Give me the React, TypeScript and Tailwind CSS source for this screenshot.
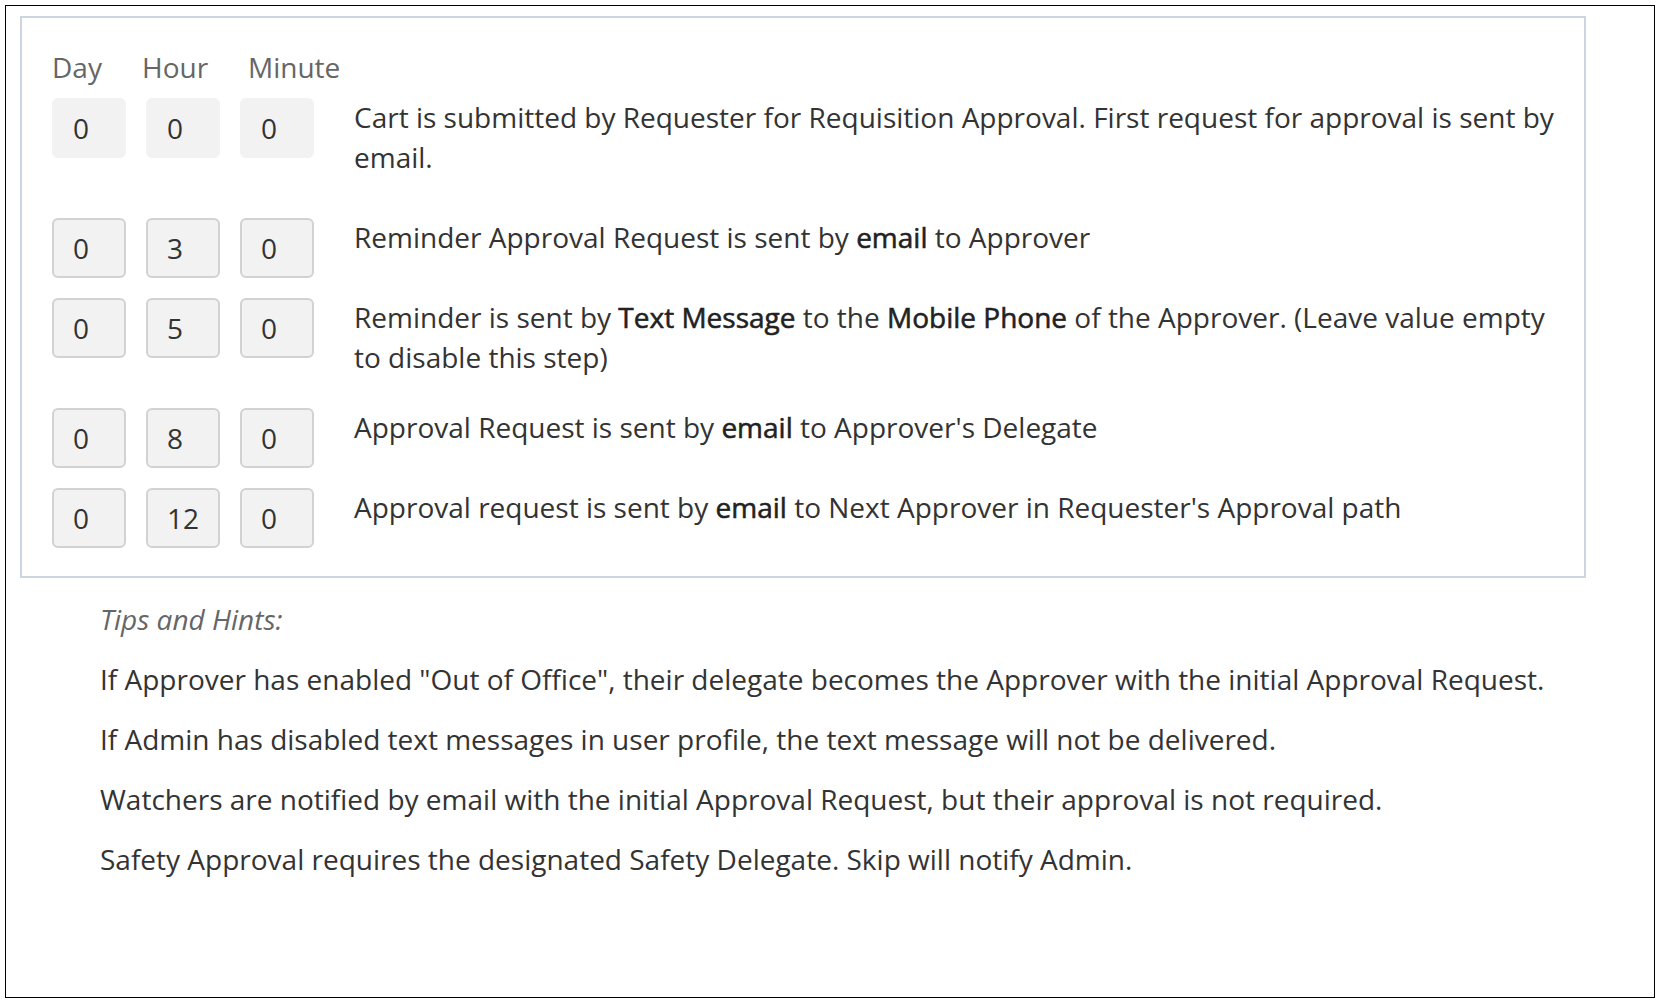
import React from "react";

type Step = {
  day: string;
  hour: string;
  minute: string;
  text: React.ReactNode;
  first?: boolean;
  gap: string;
};

// emphasised words: a light stroke over the regular face
const B = ({ children }: { children: React.ReactNode }) => (
  <span className="text-[#222] [-webkit-text-stroke:0.55px_#222]">{children}</span>
);

const steps: Step[] = [
  {
    day: "0",
    hour: "0",
    minute: "0",
    first: true,
    gap: "mb-[41px]",
    text: (
      <>
        Cart is submitted by Requester for Requisition Approval. First request for approval is sent by
        email.
      </>
    ),
  },
  {
    day: "0",
    hour: "3",
    minute: "0",
    gap: "mb-[20px]",
    text: (
      <>
        Reminder Approval Request is sent by <B>email</B> to Approver
      </>
    ),
  },
  {
    day: "0",
    hour: "5",
    minute: "0",
    gap: "mb-[31px]",
    text: (
      <>
        Reminder is sent by <B>Text Message</B> to the <B>Mobile Phone</B> of the Approver. (Leave value
        empty to disable this step)
      </>
    ),
  },
  {
    day: "0",
    hour: "8",
    minute: "0",
    gap: "mb-[20px]",
    text: (
      <>
        Approval Request is sent by <B>email</B> to Approver's Delegate
      </>
    ),
  },
  {
    day: "0",
    hour: "12",
    minute: "0",
    gap: "mb-0",
    text: (
      <>
        Approval request is sent by <B>email</B> to Next Approver in Requester's Approval path
      </>
    ),
  },
];

const hints = [
  'If Approver has enabled "Out of Office", their delegate becomes the Approver with the initial Approval Request.',
  "If Admin has disabled text messages in user profile, the text message will not be delivered.",
  "Watchers are notified by email with the initial Approval Request, but their approval is not required.",
  "Safety Approval requires the designated Safety Delegate. Skip will notify Admin.",
];

function TimeBox({ value, plain }: { value: string; plain?: boolean }) {
  return (
    <input
      type="text"
      readOnly
      value={value}
      className={
        "w-[74px] h-[60px] shrink-0 rounded-[6px] border-2 bg-[#f2f2f2] pl-[19px] text-[28px] text-[#333] outline-none " +
        (plain ? "border-[#f2f2f2]" : "border-[#d2d2d2]")
      }
      style={{ fontFamily: "inherit" }}
    />
  );
}

export default function App() {
  return (
    <div
      className="w-[1662px] h-[1006px] bg-white text-[#333]"
      style={{ fontFamily: '"Open Sans", "Noto Sans", sans-serif' }}
    >
      <div className="ml-[5px] mt-[5px] w-[1650px] h-[993px] border border-black">
        {/* schedule panel */}
        <div className="ml-[14px] mt-[10px] w-[1566px] border-2 border-[#cdd6de] pl-[30px] pr-[30px] pt-[29px] pb-[28px]">
          <div className="flex h-[40px] text-[28px] leading-[40px] text-[#666]">
            <span className="w-[90px]">Day</span>
            <span className="w-[106px]">Hour</span>
            <span>Minute</span>
          </div>
          <div className="mt-[11px]">
            {steps.map((s, i) => (
              <div key={i} className={"flex items-start " + s.gap}>
                <div className="flex gap-[20px]">
                  <TimeBox value={s.day} plain={s.first} />
                  <TimeBox value={s.hour} plain={s.first} />
                  <TimeBox value={s.minute} plain={s.first} />
                </div>
                <p className="ml-[40px] mt-[-1px] flex-1 text-[28px] leading-[40px]">{s.text}</p>
              </div>
            ))}
          </div>
        </div>

        {/* tips */}
        <div className="ml-[94px] mt-[21px] text-[28px] leading-[40px]">
          <p className="mb-[20px] italic text-[#666]">Tips and Hints:</p>
          {hints.map((h, i) => (
            <p key={i} className="mb-[20px]">
              {h}
            </p>
          ))}
        </div>
      </div>
    </div>
  );
}
